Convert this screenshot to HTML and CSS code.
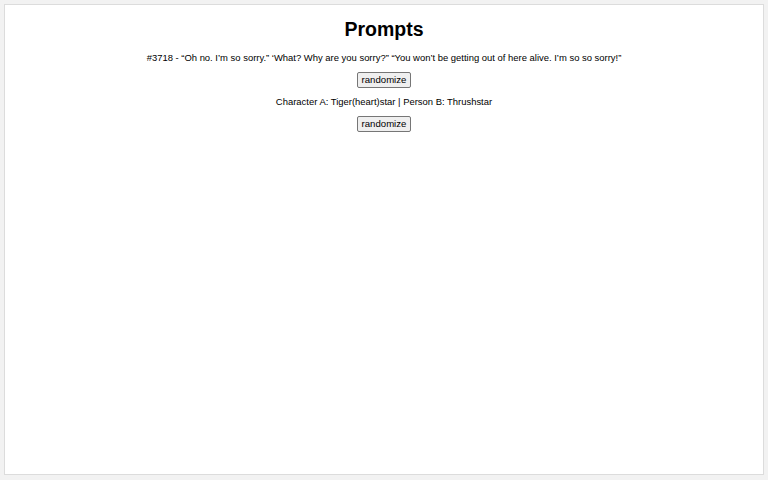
FILE: index.html
```html
<!DOCTYPE html>
<html>
<head>
<meta charset="utf-8">
<link rel="stylesheet" href="styles.css">
</head>
<body>
<div class="page">
  <h1 class="title">Prompts</h1>
  <p class="line">#3718 - “Oh no. I’m so sorry.” ‘What? Why are you sorry?” “You won’t be getting out of here alive. I’m so so sorry!”</p>
  <div class="row"><button class="btn">randomize</button></div>
  <p class="line">Character A: Tiger(heart)star | Person B: Thrushstar</p>
  <div class="row"><button class="btn">randomize</button></div>
</div>
</body>
</html>
```
FILE: styles.css
```css
html, body {
  margin: 0;
  padding: 0;
  background: #f2f2f2;
  font-family: "Liberation Sans", Arial, sans-serif;
  color: #000;
}
.page {
  margin: 4px;
  height: 471px;
  box-sizing: border-box;
  background: #fff;
  border: 1px solid #dcdcdc;
  text-align: center;
  padding-top: 13px;
}
.title {
  font-size: 19.5px;
  font-weight: bold;
  margin: 0 0 11px;
  line-height: 22px;
}
.line {
  font-size: 9.45px;
  margin: 0;
  line-height: 14px;
}
.row {
  margin: 7px 0 7px;
  line-height: 0;
}
.btn {
  font-family: "Liberation Sans", Arial, sans-serif;
  font-size: 9.6px;
  height: 16px;
  padding: 0 4px;
  line-height: 14px;
  background: #efefef;
  border: 1px solid #767676;
  border-radius: 2px;
  color: #000;
}
```
